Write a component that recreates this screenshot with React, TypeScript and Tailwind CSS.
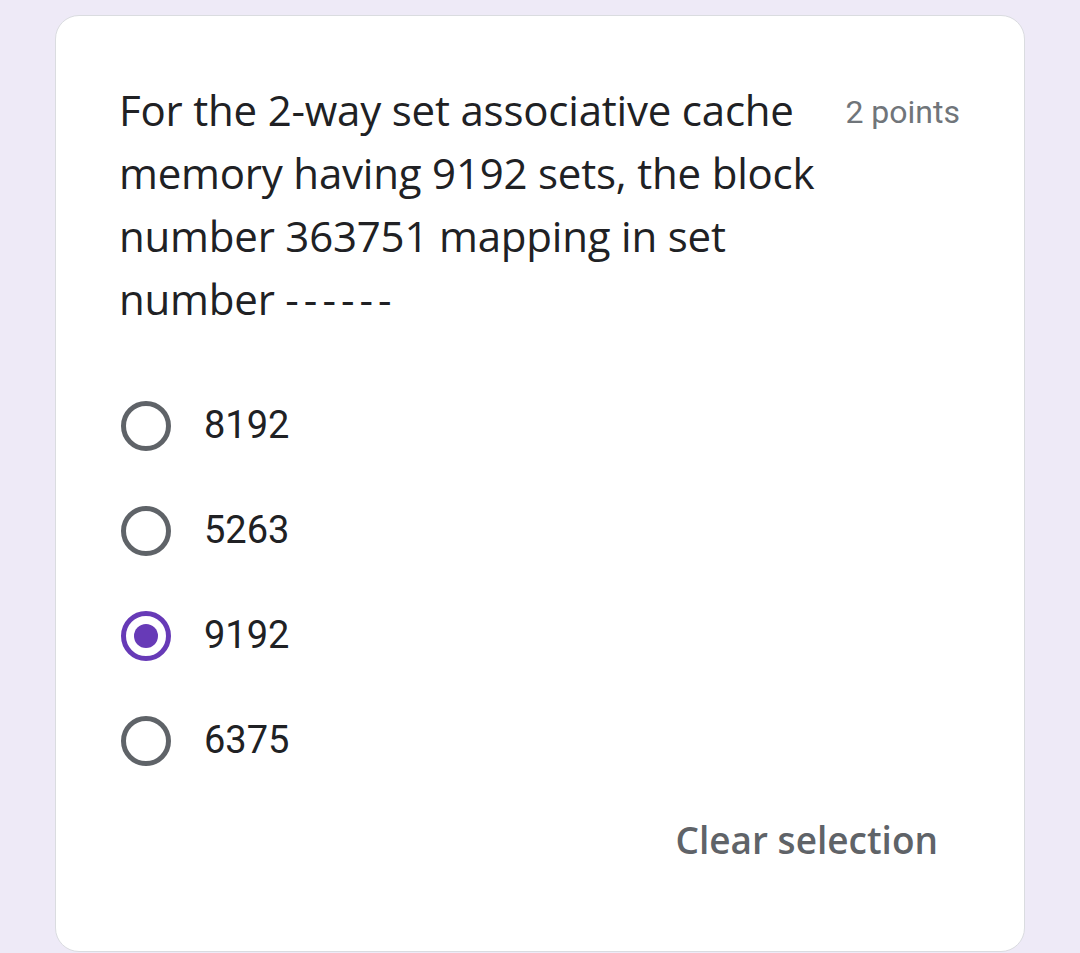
import React from 'react';

const options = [
  { label: '8192', checked: false },
  { label: '5263', checked: false },
  { label: '9192', checked: true },
  { label: '6375', checked: false },
];

const Radio: React.FC<{ checked: boolean }> = ({ checked }) =>
  checked ? (
    <span className="flex h-[50px] w-[50px] shrink-0 items-center justify-center rounded-full border-[5px] border-[#673ab7]">
      <span className="h-[24px] w-[24px] rounded-full bg-[#673ab7]" />
    </span>
  ) : (
    <span className="h-[50px] w-[50px] shrink-0 rounded-full border-[5px] border-[#5f6368]" />
  );

const App: React.FC = () => (
  <div className="min-h-screen bg-[#eeeaf7] px-[55px] pt-[15px]">
    <div className="h-[937px] rounded-[24px] border border-[#dadce0] bg-white pl-[65px] pr-[64px] pt-[62px]">
      <div className="flex items-start justify-between">
        <h2
          className="-ml-[2px] text-[42px] leading-[63px] tracking-[-0.2px] text-[#202124]"
          style={{ fontFamily: '"Open Sans", "Noto Sans", sans-serif' }}
        >
          For the 2-way set associative cache
          <br />
          memory having 9192 sets, the block
          <br />
          number 363751 mapping in set
          <br />
          number <span className="tracking-[5px]">------</span>
        </h2>
        <span
          className="pt-[16px] text-[32px] leading-[36px] text-[#70757a]"
          style={{ fontFamily: 'Roboto, "Liberation Sans", sans-serif' }}
        >
          2 points
        </span>
      </div>

      <div className="mt-[43px] flex flex-col">
        {options.map((o) => (
          <label key={o.label} className="flex h-[105px] items-center gap-[33px]">
            <Radio checked={o.checked} />
            <span
              className="text-[38px] text-[#202124]"
              style={{ fontFamily: 'Roboto, "Liberation Sans", sans-serif' }}
            >
              {o.label}
            </span>
          </label>
        ))}
      </div>

      <div className="flex justify-end pr-[22px] pt-[26px]">
        <button
          className="text-[37px] font-semibold leading-[42px] text-[#5f6368]"
          style={{ fontFamily: '"Open Sans", "Noto Sans", sans-serif' }}
        >
          Clear selection
        </button>
      </div>
    </div>
  </div>
);

export default App;
